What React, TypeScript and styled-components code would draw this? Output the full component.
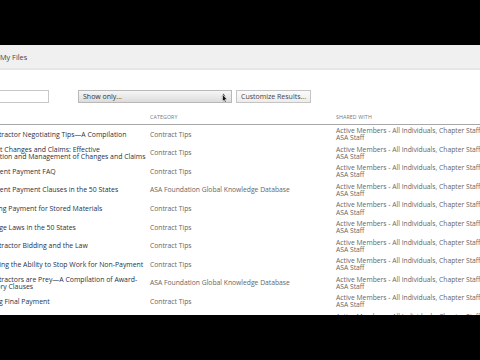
import React from "react";
import styled, { createGlobalStyle } from "styled-components";

const Global = createGlobalStyle`
  html, body { margin: 0; padding: 0; background: #000; overflow: hidden; }
  body { font-family: "Open Sans", "DejaVu Sans", sans-serif; }
`;

const Screen = styled.div`
  width: 480px;
  height: 360px;
  display: flex;
  flex-direction: column;
  background: #000;
`;

const Letterbox = styled.div<{ $h: number }>`
  height: ${(p) => p.$h}px;
  flex: none;
  background: #000;
`;

const Viewport = styled.div`
  height: 270px;
  flex: none;
  background: #fff;
  overflow: hidden;
`;

const Page = styled.div`
  margin-left: -30px;
  width: 560px;
`;

const TitleBar = styled.div`
  height: 23px;
  background: #f0f0f0;
  border-bottom: 2px solid #e6e6e6;
  display: flex;
  align-items: center;
  padding-left: 30px;
  font-size: 7.3px;
  color: #444;
`;

const Toolbar = styled.div`
  margin-top: 20px;
  height: 13px;
  display: flex;
  align-items: stretch;
  padding-left: 9px;
`;

const SearchBox = styled.div`
  width: 68px;
  border: 1px solid #c8c8c8;
  background: #fff;
`;

const Select = styled.div`
  position: relative;
  margin-left: 29px;
  width: 148px;
  border: 1px solid #b8b8b8;
  background: linear-gradient(#f6f6f6, #dcdcdc);
  display: flex;
  align-items: center;
  padding-left: 4px;
  font-size: 7px;
  color: #333;
`;

const Arrows = styled.svg`
  position: absolute;
  right: 5px;
  top: 2px;
`;

const Cursor = styled.svg`
  position: absolute;
  right: 3px;
  top: 3px;
`;

const Button = styled.div`
  margin-left: 4px;
  width: 73px;
  border: 1px solid #c4c4c4;
  background: linear-gradient(#fbfbfb, #ececec);
  display: flex;
  align-items: center;
  justify-content: center;
  font-size: 7px;
  color: #444;
`;

const Table = styled.div`
  display: grid;
  grid-template-columns: 175px 186px 160px;
  padding-left: 5px;
`;

const HeadCell = styled.div`
  height: 22px;
  box-sizing: border-box;
  border-bottom: 1px solid #a8a8a8;
  display: flex;
  align-items: flex-end;
  padding-bottom: 3px;
  font-size: 5.3px;
  letter-spacing: 0.1px;
  text-transform: uppercase;
  color: #777;
`;

const Cell = styled.div<{ $kind: "title" | "cat" | "share" }>`
  padding: 2.2px ${(p) => (p.$kind === "title" ? "0" : "6px")} 2.2px 0;
  display: flex;
  align-items: center;
  white-space: pre-line;
  font-size: ${(p) => (p.$kind === "title" ? "6.9px" : "6.75px")};
  line-height: 7.1px;
  color: ${(p) => (p.$kind === "title" ? "#28303f" : "#666")};
`;

type Row = { t: string; c: string };

const GK = "ASA Foundation Global Knowledge Database";
const rows: Row[] = [
  { t: "Subcontractor Negotiating Tips—A Compilation", c: "Contract Tips" },
  {
    t: "Contract Changes and Claims: Effective\nNotification and Management of Changes and Claims",
    c: "Contract Tips",
  },
  { t: "Contingent Payment FAQ", c: "Contract Tips" },
  { t: "Contingent Payment Clauses in the 50 States", c: GK },
  { t: "Obtaining Payment for Stored Materials", c: "Contract Tips" },
  { t: "Retainage Laws in the 50 States", c: "Contract Tips" },
  { t: "Subcontractor Bidding and the Law", c: "Contract Tips" },
  { t: "Preserving the Ability to Stop Work for Non-Payment", c: "Contract Tips" },
  { t: "Subcontractors are Prey—A Compilation of Award-\nPredatory Clauses", c: GK },
  { t: "Securing Final Payment", c: "Contract Tips" },
  { t: "Subcontractor Bidding and the Law", c: "Contract Tips" },
];

const SHARED = "Active Members - All Individuals, Chapter Staff, ASA Staff";

export default function App() {
  return (
    <>
      <Global />
      <Screen>
        <Letterbox $h={45} />
        <Viewport>
          <Page>
            <TitleBar>My Files</TitleBar>
            <Toolbar>
              <SearchBox />
              <Select>
                Show only...
                <Arrows width="5" height="9" viewBox="0 0 5 9">
                  <path d="M2.5 0.5 L4.5 3.5 L0.5 3.5 Z M2.5 8.5 L4.5 5.5 L0.5 5.5 Z" fill="#555" />
                </Arrows>
                <Cursor width="6" height="9" viewBox="0 0 6 9">
                  <path d="M0.5 0.5 L0.5 7.5 L2 6 L3.2 8.5 L4.3 8 L3.2 5.6 L5.3 5.6 Z" fill="#111" stroke="#fff" strokeWidth="0.6" />
                </Cursor>
              </Select>
              <Button>Customize Results...</Button>
            </Toolbar>
            <Table>
              <HeadCell />
              <HeadCell>Category</HeadCell>
              <HeadCell>Shared With</HeadCell>
              {rows.map((r, i) => (
                <React.Fragment key={i}>
                  <Cell $kind="title">{r.t}</Cell>
                  <Cell $kind="cat">{r.c}</Cell>
                  <Cell $kind="share">{SHARED}</Cell>
                </React.Fragment>
              ))}
            </Table>
          </Page>
        </Viewport>
        <Letterbox $h={45} />
      </Screen>
    </>
  );
}
